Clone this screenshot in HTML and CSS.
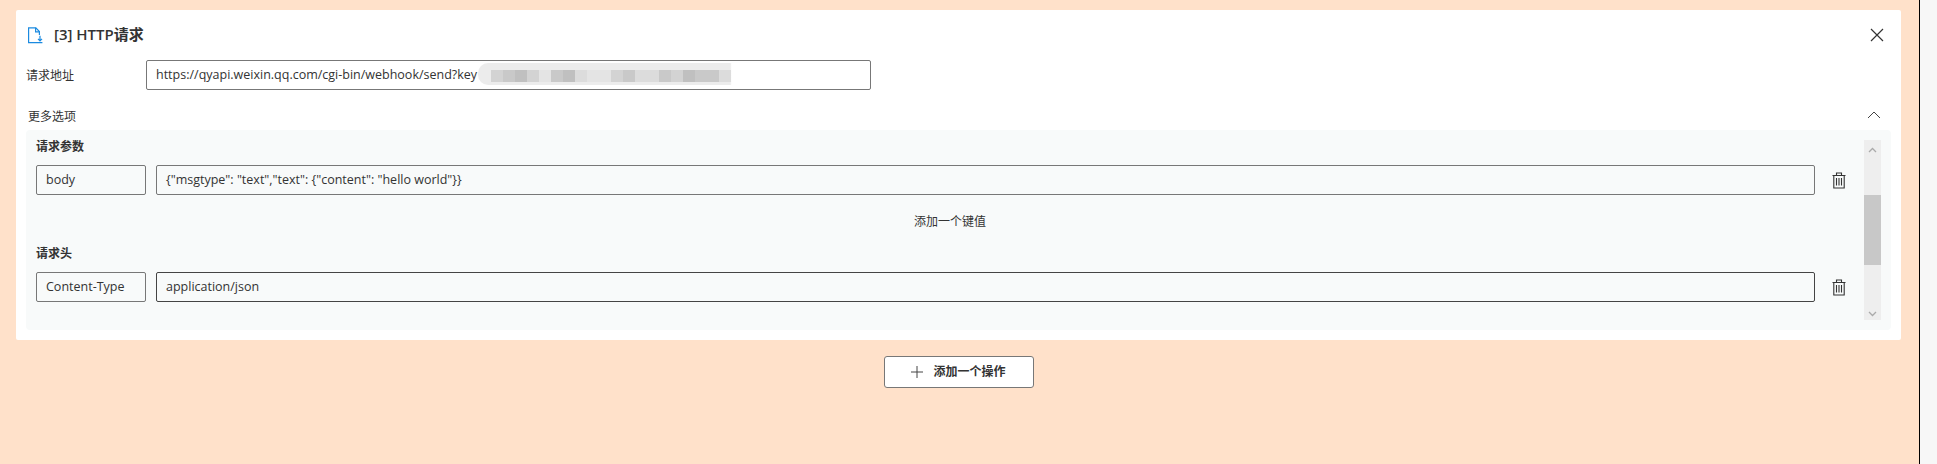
FILE: index.html
```html
<!DOCTYPE html>
<html lang="zh">
<head>
<meta charset="utf-8">
<title>HTTP请求</title>
<link rel="stylesheet" href="styles.css">
</head>
<body>
<main class="canvas">
  <section class="card">
    <header class="card-head">
      <svg class="file-icon" width="16" height="17" viewBox="0 0 16 17" fill="none" stroke="#1b8ae0" stroke-width="1.2">
        <path d="M15.400 15.600H1.600V.8h7.200l3.600 3.800v3.400"/>
        <path d="M8.600.8v4h3.800"/>
        <path d="M13 8.800v5M11 11.800l2 2 2-2"/>
      </svg>
      <h1 class="title">[3] HTTP请求</h1>
      <svg class="close" width="14" height="14" viewBox="0 0 14 14" fill="none" stroke="#333" stroke-width="1.2"><path d="M1 1l12 12M13 1L1 13"/></svg>
    </header>
    <div class="url-row">
      <label class="url-label">请求地址</label>
      <div class="field url-field">https://qyapi.weixin.qq.com/cgi-bin/webhook/send?key<div class="redact">
        <i class="m2"></i><i class="m3"></i><i class="m4"></i><i class="m2"></i><i class="m0"></i><i class="m3"></i><i class="m4"></i><i class="m1"></i><i class="m0"></i><i class="m0"></i><i class="m2"></i><i class="m3"></i><i class="m1"></i><i class="m1"></i><i class="m3"></i><i class="m2"></i><i class="m4"></i><i class="m3"></i><i class="m3"></i><i class="m1"></i>
      </div></div>
    </div>
    <div class="more-row">
      <span class="more-label">更多选项</span>
      <svg class="more-chevron" width="14" height="8" viewBox="0 0 14 8" fill="none" stroke="#444" stroke-width="1"><path d="M1 7l6-6 6 6"/></svg>
    </div>
    <div class="panel">
      <div class="panel-body">
        <h2 class="section-title">请求参数</h2>
        <div class="kv-row">
          <div class="field key">body</div>
          <div class="field value">{"msgtype": "text","text": {"content": "hello world"}}</div>
          <svg class="trash" width="14" height="17" viewBox="0 0 14 17" fill="none" stroke="#333" stroke-width="1.1"><path d="M.5 3.500h13M4.500 3.500V1h5v2.500M1.800 3.500V16h10.400V3.500M4.500 6v7.500M7 6v7.500M9.500 6v7.500"/></svg>
        </div>
        <div class="add-kv">添加一个键值</div>
        <h2 class="section-title head-title">请求头</h2>
        <div class="kv-row">
          <div class="field key">Content-Type</div>
          <div class="field value dark">application/json</div>
          <svg class="trash" width="14" height="17" viewBox="0 0 14 17" fill="none" stroke="#333" stroke-width="1.1"><path d="M.5 3.500h13M4.500 3.500V1h5v2.500M1.800 3.500V16h10.400V3.500M4.500 6v7.500M7 6v7.500M9.500 6v7.500"/></svg>
        </div>
      </div>
      <div class="scrollbar">
        <svg class="arrow" width="9" height="6" viewBox="0 0 9 6" fill="none" stroke="#aaa" stroke-width="1.3"><path d="M1 5l3.500-3.500L8 5"/></svg>
        <div class="thumb"></div>
        <svg class="arrow arrow-down" width="9" height="6" viewBox="0 0 9 6" fill="none" stroke="#aaa" stroke-width="1.3"><path d="M1 1l3.500 3.500L8 1"/></svg>
      </div>
    </div>
  </section>
  <button class="add-action" type="button">
    <svg width="12" height="12" viewBox="0 0 12 12" fill="none" stroke="#444" stroke-width="1"><path d="M6 0v12M0 6h12"/></svg>
    <span>添加一个操作</span>
  </button>
</main>
<aside class="side"></aside>
</body>
</html>
```

FILE: styles.css
```css
* { box-sizing: border-box; }
html, body { height: 100%; }
body {
  margin: 0;
  display: flex;
  height: 464px;
  overflow: hidden;
  background: #f7f7f7;
  color: #333;
  font: 12px/16px "Open Sans", "Noto Sans CJK SC", sans-serif;
}
.canvas {
  width: 1920px;
  flex: none;
  padding: 10px 18px 0 16px;
  background: #ffe1ca;
  border-right: 1px solid #000;
  display: flex;
  flex-direction: column;
}
.card {
  height: 330px;
  background: #fff;
  border-radius: 2px;
  padding: 0 10px;
  display: flex;
  flex-direction: column;
}
.card-head {
  height: 50px;
  padding: 0 7px 2px 1px;
  display: flex;
  align-items: center;
}
.file-icon { flex: none; margin-top: 2px; }
.title {
  margin: 0 0 0 11px;
  flex: 1;
  font-size: 15px;
  font-weight: 600;
  color: #333;
}
.close { flex: none; margin-top: 2px; }
.url-row { display: flex; align-items: center; height: 30px; }
.url-label { width: 120px; flex: none; margin-top: 2px; }
.field {
  height: 30px;
  border: 1px solid #777;
  border-radius: 2px;
  padding: 0 9px;
  font-size: 12.5px;
  line-height: 28px;
  white-space: nowrap;
}
.url-field { width: 725px; position: relative; background: #fff; }
.redact {
  position: absolute;
  left: 331px;
  top: 2px;
  width: 295px;
  height: 22px;
  border-radius: 10px;
  background: linear-gradient(90deg, #ececec 85.5%, #fff 86%);
  padding: 7px 0 0 13px;
  display: flex;
  align-items: flex-start;
}
.redact i { display: block; width: 12px; height: 12px; }
.m0 { background: #e4e4e4; }
.m1 { background: #dcdcdc; }
.m2 { background: #d3d3d3; }
.m3 { background: #c9c9c9; }
.m4 { background: #c0c0c0; }
.more-row {
  height: 40px;
  padding: 13px 10px 0 2px;
  display: flex;
  align-items: center;
  justify-content: space-between;
}
.more-chevron { margin-top: -4px; }
.panel {
  height: 200px;
  background: #f8fafa;
  border-radius: 4px;
  padding: 10px;
  display: flex;
}
.panel-body { flex: 1; min-width: 0; }
.section-title {
  margin: 0;
  height: 16px;
  font-size: 12px;
  font-weight: 600;
  line-height: 14px;
  color: #333;
}
.kv-row {
  margin-top: 9px;
  display: flex;
  align-items: center;
  gap: 10px;
  padding-right: 45px;
}
.key { width: 110px; flex: none; background: #f8fafa; }
.value { flex: 1; background: #f8fafa; }
.dark { border-color: #444; }
.trash { flex: none; margin: 0 -27px 0 7px; }
.add-kv { height: 16px; margin-top: 19px; margin-bottom: -1px; text-align: center; }
.head-title { margin-top: 18px; }
.scrollbar {
  width: 17px;
  flex: none;
  background: #eee;
  display: flex;
  flex-direction: column;
  align-items: center;
  padding-top: 7px;
}
.thumb { width: 100%; height: 70px; margin-top: 42px; background: #c8c8c8; }
.arrow { flex: none; }
.arrow-down { margin-top: 46px; }
.add-action {
  align-self: center;
  margin: 16px 0 0;
  width: 150px;
  height: 32px;
  border: 1px solid #777;
  border-radius: 3px;
  background: #fff;
  color: #333;
  font: 600 12px/16px "Open Sans", "Noto Sans CJK SC", sans-serif;
  display: flex;
  align-items: center;
  justify-content: center;
  gap: 10px;
}
.side { flex: 1; }
```
